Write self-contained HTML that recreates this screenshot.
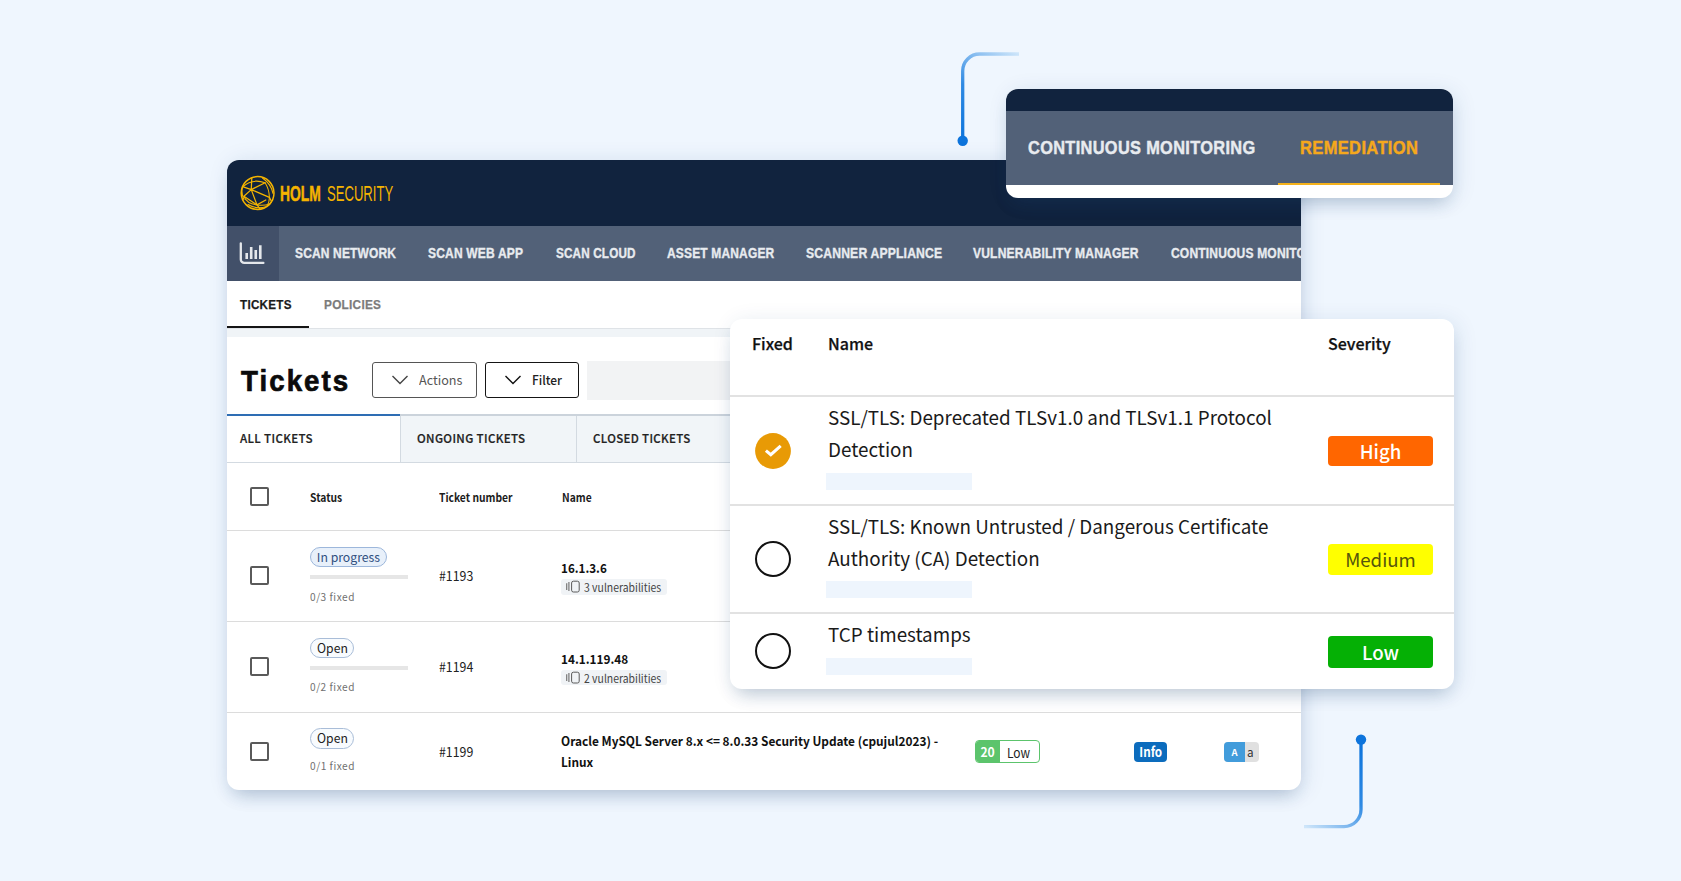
<!DOCTYPE html>
<html lang="en">
<head>
<meta charset="utf-8">
<title>Holm Security - Tickets</title>
<style>
*{box-sizing:border-box;margin:0;padding:0}
html,body{width:1681px;height:881px;overflow:hidden}
body{background:#eff6fe;font-family:"Noto Sans CJK SC","Liberation Sans",sans-serif;color:#1a1a1a;position:relative}
.abs{position:absolute}
.cond{font-family:"Liberation Sans",sans-serif;font-weight:700;display:inline-block;transform-origin:0 50%;white-space:nowrap}
/* main card */
#main{position:absolute;left:227px;top:160px;width:1074px;height:630px;background:#fff;border-radius:12px;box-shadow:0 11px 18px -7px rgba(30,65,110,.24),3px 2px 22px rgba(20,60,120,.13);overflow:hidden}
#hdr{position:absolute;left:0;top:0;width:100%;height:66px;background:#11233e}
#nav{position:absolute;left:0;top:66px;width:100%;height:55px;background:#526178}
#dash{position:absolute;left:0;top:0;width:52px;height:55px;background:#425069}
.nv{position:absolute;top:17px;-webkit-text-stroke:.35px #e8ebef;height:20px;line-height:20px;font-size:14px;color:#e8ebef;letter-spacing:.2px}
#sub{position:absolute;left:0;top:121px;width:100%;height:48px;background:#fff;border-bottom:1px solid #dfe3e7}
#band{position:absolute;left:0;top:169px;width:100%;height:8.4px;background:#f0f4f7}
.st{position:absolute;top:14.1px;-webkit-text-stroke:.25px;height:20px;line-height:20px;font-size:13.5px;letter-spacing:.3px}
.btn{position:absolute;top:202px;height:36px;border:1px solid #555;border-radius:3px;background:#fff;font-size:12.5px;line-height:34px}
.tab{position:absolute;top:256px;height:47px;font-size:12px;font-weight:500;letter-spacing:.35px;line-height:44px;color:#222;border-bottom:1px solid #d3dae1;-webkit-text-stroke:.2px #222}
.t{position:absolute;display:inline-block;white-space:nowrap;transform-origin:0 50%}
.tc{display:inline-block;white-space:nowrap;transform-origin:50% 50%}
.th{position:absolute;top:326.5px;font-size:11.5px;font-weight:700;line-height:20px;color:#1c1c1c}
.cb{position:absolute;left:23px;width:19px;height:19px;border:2px solid #5a5a5a;border-radius:2px;background:#fff}
.hr{position:absolute;left:0;width:100%;height:1px;background:#dcdcdc}
.pill{position:absolute;left:83px;height:20px;border-radius:10.5px;font-size:13px;line-height:18px;border:1px solid #a9bdd8;display:flex;justify-content:center}
.bar{position:absolute;left:83px;width:98px;height:4px;background:#e6e6e6}
.fx{position:absolute;left:83px;font-size:10.6px;color:#707070;letter-spacing:.55px;line-height:16px;margin-top:.6px}
.tn{position:absolute;left:212px;font-size:13.5px;color:#222;line-height:20px}
.nm{position:absolute;left:334px;font-size:12.6px;font-weight:700;color:#111;line-height:20px}
.vb{position:absolute;left:334px;width:106px;height:16px;background:#f0f3f6;border-radius:3px;font-size:11.5px;color:#444;line-height:17px;white-space:nowrap}
/* overlay top */
#ov1{position:absolute;left:1006px;top:89px;width:447px;height:109px;background:#fff;border-radius:12px;box-shadow:0 11px 18px -7px rgba(30,65,110,.24),3px 3px 22px rgba(20,60,120,.11);overflow:hidden}
/* overlay list */
#ov2{position:absolute;left:730px;top:318.7px;width:723.5px;height:370px;background:#fff;border-radius:12px;box-shadow:0 11px 18px -7px rgba(30,65,110,.24),3px 3px 22px rgba(20,60,120,.11);overflow:hidden}
.oh{position:absolute;top:12px;font-size:16px;font-weight:500;-webkit-text-stroke:.25px #111;line-height:24px;color:#111}
.ol{position:absolute;left:0;width:100%;height:2px;background:#e2e2e2}
.ot{position:absolute;left:98px;font-size:18.83px;line-height:31.5px;margin-top:-.6px;color:#1a1a1a;white-space:nowrap}
.ob{position:absolute;left:96px;width:146px;height:17px;background:#eef5fd}
.sev{position:absolute;left:598px;width:105px;height:31px;border-radius:4px;text-align:center;font-size:18.7px;font-weight:500;line-height:30px;color:#fff}
.rc{position:absolute;left:25px;width:36px;height:36px;border:2px solid #111;border-radius:50%}
</style>
</head>
<body>

<!-- decorative connector top -->
<svg class="abs" style="left:940px;top:40px" width="100" height="120" viewBox="0 0 100 120">
  <defs>
    <linearGradient id="g1" gradientUnits="userSpaceOnUse" x1="23" y1="100" x2="80" y2="14">
      <stop offset="0" stop-color="#0d74dc"/><stop offset=".45" stop-color="#2f8ae3"/><stop offset="1" stop-color="#cfe6fa"/>
    </linearGradient>
  </defs>
  <path d="M22.7 100 V31 A17 17 0 0 1 39.7 14 H79" fill="none" stroke="url(#g1)" stroke-width="3.3"/>
  <circle cx="22.7" cy="100.7" r="5.2" fill="#0d74dc"/>
</svg>

<!-- decorative connector bottom -->
<svg class="abs" style="left:1290px;top:725px" width="100" height="120" viewBox="0 0 100 120">
  <defs>
    <linearGradient id="g2" gradientUnits="userSpaceOnUse" x1="71" y1="20" x2="14" y2="101">
      <stop offset="0" stop-color="#0d74dc"/><stop offset=".5" stop-color="#2f8ae3"/><stop offset="1" stop-color="#cfe6fa"/>
    </linearGradient>
  </defs>
  <path d="M71 14 V84.6 A17 17 0 0 1 54 101.6 H14" fill="none" stroke="url(#g2)" stroke-width="3.3"/>
  <circle cx="71" cy="14.6" r="5.2" fill="#0d74dc"/>
</svg>

<div id="main">
  <div id="hdr">
    <svg class="abs" style="left:11px;top:14px" width="40" height="40" viewBox="0 0 40 40" fill="none" stroke="#f5b400" stroke-width="1.25" stroke-linecap="round">
      <circle cx="19.6" cy="19" r="16.4" stroke-width="1.5"/>
      <path d="M4.6 12.6 Q 2.8 19 5.9 25.5 M33.5 27.5 Q 32 31 29.5 31.4" stroke-width="1.1"/>
      <path d="M13.25 15.6 L13.8 4 M13.25 15.6 L27.1 8.7 M13.25 15.6 L31.4 23.3 M13.25 15.6 L5.9 22.3 M13.25 15.6 L4.6 12.6 M13.25 15.6 L19 30.9 M5.9 22.3 L19 30.9 M19 30.9 L27.8 26 M19 30.9 L22 34.8 M31.4 23.3 L33.5 27.5"/>
      <path d="M4.8 12.8 Q 14 4.2 27.1 8.7 M27.1 8.7 Q 31.2 15 31.4 23.3 M31.4 23.3 Q 31.5 28 29 32 M5.9 22.3 Q 9 30 19 30.9 Q 26 31.8 31.5 30 M24.5 4 Q 33.5 10.5 35 19.5 M10 30.5 Q 18 35.5 28 32.8" stroke-width="1.05"/>
    </svg>
    <span class="cond abs" id="holm" style="left:53px;top:20.6px;-webkit-text-stroke:.5px #f5b400;font-size:22px;line-height:26px;color:#f5b400;transform:scaleX(.63)">HOLM</span>
    <span class="cond abs" id="secu" style="left:100px;top:20.6px;font-size:22px;line-height:26px;color:#f5b400;font-weight:400;transform:scaleX(.595)">SECURITY</span>
  </div>
  <div id="nav">
    <div id="dash">
      <svg class="abs" style="left:11px;top:15px" width="28" height="25" viewBox="0 0 28 25" fill="none" stroke="#e4e7eb">
        <path d="M2.8 2.3 V18.4 A3.5 3.5 0 0 0 6.3 21.9 H25.4" stroke-width="2.3" stroke-linecap="round"/>
        <path d="M8.7 18 V12 M13.2 18 V6 M17.75 18 V9 M22.3 18 V4.3" stroke-width="2.6"/>
      </svg>
    </div>
    <span class="cond nv" id="n1" style="transform:scaleX(0.8546);left:68px">SCAN NETWORK</span>
    <span class="cond nv" id="n2" style="transform:scaleX(0.8594);left:201px">SCAN WEB APP</span>
    <span class="cond nv" id="n3" style="transform:scaleX(0.8359);left:329px">SCAN CLOUD</span>
    <span class="cond nv" id="n4" style="transform:scaleX(0.8558);left:440px">ASSET MANAGER</span>
    <span class="cond nv" id="n5" style="transform:scaleX(0.8687);left:579px">SCANNER APPLIANCE</span>
    <span class="cond nv" id="n6" style="transform:scaleX(0.8622);left:746px">VULNERABILITY MANAGER</span>
    <span class="cond nv" id="n7" style="transform:scaleX(0.86);left:944px">CONTINUOUS MONITORING</span>
  </div>
  <div id="sub">
    <span class="cond st" id="s1" style="transform:scaleX(0.8637);left:13px;color:#1b1b1b">TICKETS</span>
    <span class="cond st" id="s2" style="transform:scaleX(0.8743);left:97px;color:#7b7b7b">POLICIES</span>
    <div class="abs" style="left:0;top:45px;width:82px;height:2px;background:#151515"></div>
  </div>
  <div id="band"></div>

  <span class="cond abs" id="h1" style="transform:scaleX(0.938);left:13.6px;top:200.6px;-webkit-text-stroke:.7px #0b0b0b;font-size:29.5px;line-height:40px;letter-spacing:2.2px;color:#0b0b0b">Tickets</span>

  <div class="btn" style="left:145px;width:105px;color:#555"><svg class="abs" style="left:18px;top:11px" width="18" height="12" viewBox="0 0 18 12" fill="none" stroke="#444" stroke-width="1.4"><path d="M1.5 2 L9 9.5 L16.5 2"/></svg><span class="t" id="b1" style="transform:scaleX(1.0082);left:46px">Actions</span></div>
  <div class="btn" style="left:258px;width:94px;color:#222;border-color:#151515;font-weight:500"><svg class="abs" style="left:18px;top:11px" width="18" height="12" viewBox="0 0 18 12" fill="none" stroke="#111" stroke-width="1.4"><path d="M1.5 2 L9 9.5 L16.5 2"/></svg><span class="t" id="b2" style="transform:scaleX(0.9576);left:46px">Filter</span></div>
  <div class="abs" style="left:360px;top:201px;width:400px;height:39px;background:#f2f3f4"></div>

  <div class="abs" style="left:0;top:254.3px;width:100%;height:2.2px;background:#cbd3db"></div>
  <div class="abs" style="left:0;top:254.3px;width:173px;height:2.2px;background:#2e6db4"></div>
  <div class="tab" style="left:0;width:173px;background:#fff"><span class="t" id="t1" style="transform:scaleX(0.9657);left:13px">ALL TICKETS</span></div>
  <div class="tab" style="left:173px;width:176px;background:#f1f5f8;border-left:1px solid #d3dae1"><span class="t" id="t2" style="transform:scaleX(0.9645);left:15.5px">ONGOING TICKETS</span></div>
  <div class="tab" style="left:349px;width:725px;background:#f1f5f8;border-left:1px solid #d3dae1"><span class="t" id="t3" style="transform:scaleX(0.9589);left:15.5px">CLOSED TICKETS</span></div>

  <div class="cb" style="top:327px"></div>
  <div class="th t" id="h_s" style="transform:scaleX(0.8983);left:83px">Status</div>
  <div class="th t" id="h_t" style="transform:scaleX(0.8936);left:212px">Ticket number</div>
  <div class="th t" id="h_n" style="transform:scaleX(0.8919);left:334.5px">Name</div>

  <div class="hr" style="top:370px"></div>
  <div class="cb" style="top:406.2px"></div>
  <div class="pill" style="top:387px;width:77px;background:#e8f0fa;border-color:#9db7db;color:#2f4f7f"><span class="tc" id="p1" style="transform:scaleX(1.0047);font-size:12.2px;">In progress</span></div>
  <div class="bar" style="top:415px"></div>
  <div class="fx t" id="f1" style="transform:scaleX(0.9536);top:428.3px">0/3 fixed</div>
  <div class="tn t" id="k1" style="transform:scaleX(0.9154);top:404.9px">#1193</div>
  <div class="nm t" id="m1" style="transform:scaleX(0.9264);top:398px">16.1.3.6</div>
  <div class="vb" style="top:419px"><svg class="abs" style="left:4px;top:.7px" width="16" height="13" viewBox="0 0 16 13" fill="none" stroke="#5a5a5a" stroke-width="1"><path d="M1.7 3.2 V10 M3.9 2 V11" stroke="#777" stroke-width="1.2"/><rect x="6.6" y="1.2" width="7.6" height="10.8" rx="1.8"/></svg><span class="t" id="v1" style="transform:scaleX(0.9064);left:22.5px">3 vulnerabilities</span></div>

  <div class="hr" style="top:461px"></div>
  <div class="cb" style="top:497px"></div>
  <div class="pill" style="top:478px;width:44px;background:#f8fbfe;color:#222"><span class="tc" id="p2" style="transform:scaleX(0.9378);">Open</span></div>
  <div class="bar" style="top:505.7px"></div>
  <div class="fx t" id="f2" style="transform:scaleX(0.9536);top:518.3px">0/2 fixed</div>
  <div class="tn t" id="k2" style="transform:scaleX(0.9154);top:496.3px">#1194</div>
  <div class="nm t" id="m2" style="transform:scaleX(0.9368);top:489px">14.1.119.48</div>
  <div class="vb" style="top:510px;height:14.5px"><svg class="abs" style="left:4px;top:.7px" width="16" height="13" viewBox="0 0 16 13" fill="none" stroke="#5a5a5a" stroke-width="1"><path d="M1.7 3.2 V10 M3.9 2 V11" stroke="#777" stroke-width="1.2"/><rect x="6.6" y="1.2" width="7.6" height="10.8" rx="1.8"/></svg><span class="t" id="v2" style="transform:scaleX(0.9064);left:22.5px;height:13.1px;overflow:hidden">2 vulnerabilities</span></div>

  <div class="hr" style="top:552px"></div>
  <div class="cb" style="top:582px"></div>
  <div class="pill" style="top:568px;height:21px;line-height:17.4px;width:44px;background:#f8fbfe;color:#222"><span class="tc" id="p3" style="transform:scaleX(0.9378);">Open</span></div>
  <div class="fx t" id="f3" style="transform:scaleX(0.9558);top:597.5px">0/1 fixed</div>
  <div class="tn t" id="k3" style="transform:scaleX(0.9154);top:580.9px">#1199</div>
  <div class="nm t" id="m3" style="transform:scaleX(0.9421);top:571.1px">Oracle MySQL Server 8.x &lt;= 8.0.33 Security Update (cpujul2023) -</div>
  <div class="nm t" id="m4" style="transform:scaleX(0.9393);top:592px">Linux</div>

  <div class="abs" style="left:748px;top:580px;width:65px;height:23px;border:1px solid #5cc46c;border-radius:4px;background:#fff;font-size:13.5px;line-height:22.6px;color:#222;overflow:hidden"><span style="position:absolute;left:-1.6px;top:-1px;width:25.6px;height:23px;background:#5cc46c;color:#fff;font-weight:700;text-align:center;font-size:12.8px;line-height:23.6px"><span class="tc" style="transform:scaleX(.95)">20</span></span><span class="t" style="left:31.3px;top:0;transform:scaleX(.885)">Low</span></div>
  <div class="abs" style="left:907px;top:582px;width:33px;height:20px;border-radius:4px;background:#0c6cbd;color:#fff;font-size:13px;font-weight:700;text-align:center;line-height:20.4px;display:flex;justify-content:center"><span class="tc" style="transform:scaleX(.9)">Info</span></div>
  <div class="abs" style="left:997px;top:582px;width:35px;height:20px;border-radius:4px;background:#e0e0e0;overflow:hidden;font-size:13px;line-height:20.2px;color:#333"><span style="position:absolute;left:0;top:0;width:21px;height:20px;background:#429cdb;color:#fff;font-weight:700;font-size:9.5px;text-align:center;line-height:21.6px">A</span><span class="t" style="left:23px;top:0;transform:scaleX(.9)">a</span></div>
</div>

<!-- top overlay -->
<div id="ov1">
  <div class="abs" style="left:0;top:0;width:100%;height:22px;background:#11233e"></div>
  <div class="abs" style="left:0;top:22px;width:100%;height:74px;background:#526178"></div>
  <span class="cond abs" id="cm" style="-webkit-text-stroke:.45px #e8ebef;transform:scaleX(0.8599);left:22px;top:46px;font-size:19px;line-height:26px;color:#e8ebef;letter-spacing:.4px">CONTINUOUS MONITORING</span>
  <span class="cond abs" id="rm" style="-webkit-text-stroke:.45px #f5a81c;transform:scaleX(0.8695);left:294px;top:46px;font-size:19px;line-height:26px;color:#f5a81c;letter-spacing:.4px">REMEDIATION</span>
  <div class="abs" style="left:272px;top:94px;width:162px;height:2px;background:#f5b21c"></div>
</div>

<!-- list overlay -->
<div id="ov2">
  <div class="oh" style="left:22px">Fixed</div>
  <div class="oh" style="left:98px">Name</div>
  <div class="oh" style="left:598px">Severity</div>
  <div class="ol" style="top:76px"></div>

  <svg class="abs" style="left:24.5px;top:114px" width="36" height="36" viewBox="0 0 36 36"><circle cx="18" cy="18" r="17.9" fill="#e89a05"/><path d="M10.9 17.6 L15.8 21.7 L25.7 12.9" fill="none" stroke="#fff" stroke-width="3.1"/></svg>
  <div class="ot" style="top:83px">SSL/TLS: Deprecated TLSv1.0 and TLSv1.1 Protocol<br>Detection</div>
  <div class="ob" style="top:154px"></div>
  <div class="sev" style="top:117.2px;height:30.5px;background:#ff6600">High</div>
  <div class="ol" style="top:185px"></div>

  <div class="rc" style="top:222px"></div>
  <div class="ot" style="top:192px">SSL/TLS: Known Untrusted / Dangerous Certificate<br>Authority (CA) Detection</div>
  <div class="ob" style="top:262px"></div>
  <div class="sev" style="top:225.3px;height:31.3px;background:#ffff00;color:#55550c;font-weight:400;font-size:18.6px">Medium</div>
  <div class="ol" style="top:293px"></div>

  <div class="rc" style="top:314px"></div>
  <div class="ot" style="top:300px">TCP timestamps</div>
  <div class="ob" style="top:339px"></div>
  <div class="sev" style="top:317.2px;height:31.8px;line-height:31px;background:#05b005">Low</div>
</div>

</body>
</html>
